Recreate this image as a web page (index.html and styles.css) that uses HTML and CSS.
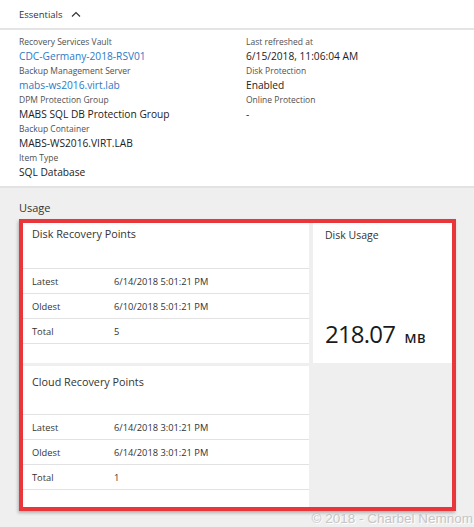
FILE: index.html
```html
<!DOCTYPE html>
<html>
<head>
  <title>Backup Item - Essentials</title>
  <link rel="stylesheet" href="styles.css">
</head>
<body>
  <div class="blade">
    <div class="essentials-header">
      <span>Essentials</span>
      <svg class="chevron" width="10" height="6" viewBox="0 0 10 6">
        <polyline points="1,5.5 5,1.5 9,5.5" fill="none" stroke="#333" stroke-width="1.2"/>
      </svg>
    </div>

    <div class="essentials">
      <div class="column">
        <div class="field">
          <div class="label">Recovery Services Vault</div>
          <div class="value link">CDC-Germany-2018-RSV01</div>
        </div>
        <div class="field">
          <div class="label">Backup Management Server</div>
          <div class="value link">mabs-ws2016.virt.lab</div>
        </div>
        <div class="field">
          <div class="label">DPM Protection Group</div>
          <div class="value">MABS SQL DB Protection Group</div>
        </div>
        <div class="field">
          <div class="label">Backup Container</div>
          <div class="value">MABS-WS2016.VIRT.LAB</div>
        </div>
        <div class="field">
          <div class="label">Item Type</div>
          <div class="value">SQL Database</div>
        </div>
      </div>
      <div class="column">
        <div class="field">
          <div class="label">Last refreshed at</div>
          <div class="value">6/15/2018, 11:06:04 AM</div>
        </div>
        <div class="field">
          <div class="label">Disk Protection</div>
          <div class="value">Enabled</div>
        </div>
        <div class="field">
          <div class="label">Online Protection</div>
          <div class="value">-</div>
        </div>
      </div>
    </div>

    <div class="usage">
      <div class="usage-title">Usage</div>
      <div class="tiles">
        <div class="tile points-tile">
          <div class="tile-title">Disk Recovery Points</div>
          <div class="row"><span class="row-label">Latest</span><span>6/14/2018 5:01:21 PM</span></div>
          <div class="row"><span class="row-label">Oldest</span><span>6/10/2018 5:01:21 PM</span></div>
          <div class="row"><span class="row-label">Total</span><span>5</span></div>
        </div>
        <div class="tile usage-tile">
          <div class="usage-tile-title">Disk Usage</div>
          <div class="usage-amount">218.07 <span class="unit">MB</span></div>
        </div>
        <div class="tile points-tile cloud">
          <div class="tile-title">Cloud Recovery Points</div>
          <div class="row"><span class="row-label">Latest</span><span>6/14/2018 3:01:21 PM</span></div>
          <div class="row"><span class="row-label">Oldest</span><span>6/14/2018 3:01:21 PM</span></div>
          <div class="row"><span class="row-label">Total</span><span>1</span></div>
        </div>
      </div>
      <div class="watermark">&copy; 2018 - Charbel Nemnom</div>
    </div>
  </div>
</body>
</html>
```

FILE: styles.css
```css
/* Main Styles */
body {
  margin: 0;
  padding: 0;
  font-family: "Open Sans", "Noto Sans", sans-serif;
  color: #222;
  background-color: #fff;
}

.blade {
  width: 474px;
  height: 527px;
  display: flex;
  flex-direction: column;
  overflow: hidden;
}

/* Essentials Header */
.essentials-header {
  height: 28px;
  padding-left: 19px;
  display: flex;
  align-items: center;
  gap: 9px;
  font-size: 9.5px;
  color: #333;
  border-bottom: 2px solid #e4e4e4;
}

.chevron {
  margin-top: -1px;
}

/* Essentials Grid */
.essentials {
  display: grid;
  grid-template-columns: 227px 1fr;
  padding: 5px 19px 6px;
  border-bottom: 2px solid #e2e2e2;
}

.field {
  height: 29px;
}

.label {
  height: 13px;
  line-height: 13px;
  font-size: 8.5px;
  color: #505050;
}

.value {
  height: 16px;
  line-height: 16px;
  font-size: 10.2px;
  color: #222;
}

.value.link {
  color: #2a7ac7;
}

/* Usage Section */
.usage {
  flex: 1;
  position: relative;
  background-color: #efefef;
  padding: 12px 19px 0;
}

.usage-title {
  height: 16px;
  line-height: 16px;
  font-size: 11px;
  color: #333;
  margin-bottom: 3px;
}

.tiles {
  width: 429px;
  display: grid;
  grid-template-columns: 286px 139px;
  grid-template-rows: 140px 141px;
  column-gap: 4px;
  row-gap: 3px;
  border: 4px solid #e8363b;
  box-shadow: -1px 2px 3px rgba(0, 0, 0, 0.25);
}

.tile {
  background-color: #fff;
}

.points-tile {
  display: flex;
  flex-direction: column;
}

.tile-title {
  height: 46px;
  padding: 3px 0 0 9px;
  box-sizing: border-box;
  font-size: 10.8px;
  color: #333;
  border-bottom: 1px solid #e2e2e2;
}

.cloud .tile-title {
  height: 49px;
  padding-top: 8px;
}

.row {
  height: 24px;
  display: flex;
  align-items: center;
  padding-left: 9px;
  font-size: 9.3px;
  color: #333;
  border-bottom: 1px solid #e2e2e2;
}

.row-label {
  width: 82px;
}

/* Disk Usage Tile */
.usage-tile {
  display: flex;
  flex-direction: column;
  justify-content: space-between;
  padding: 5px 0 10px 12px;
  box-sizing: border-box;
}

.usage-tile-title {
  font-size: 10.5px;
  color: #333;
}

.usage-amount {
  font-size: 24px;
  line-height: 30px;
  letter-spacing: -0.8px;
  color: #1a1a1a;
}

.usage-amount .unit {
  font-size: 13px;
  font-weight: 600;
  letter-spacing: 0.5px;
  margin-left: 4px;
}

/* Watermark */
.watermark {
  position: absolute;
  right: 1px;
  bottom: 1px;
  font-family: "Liberation Sans", Arial, sans-serif;
  font-size: 13.5px;
  color: #c6c6c6;
  text-shadow: 1px 1px 0 #fff;
}
```
